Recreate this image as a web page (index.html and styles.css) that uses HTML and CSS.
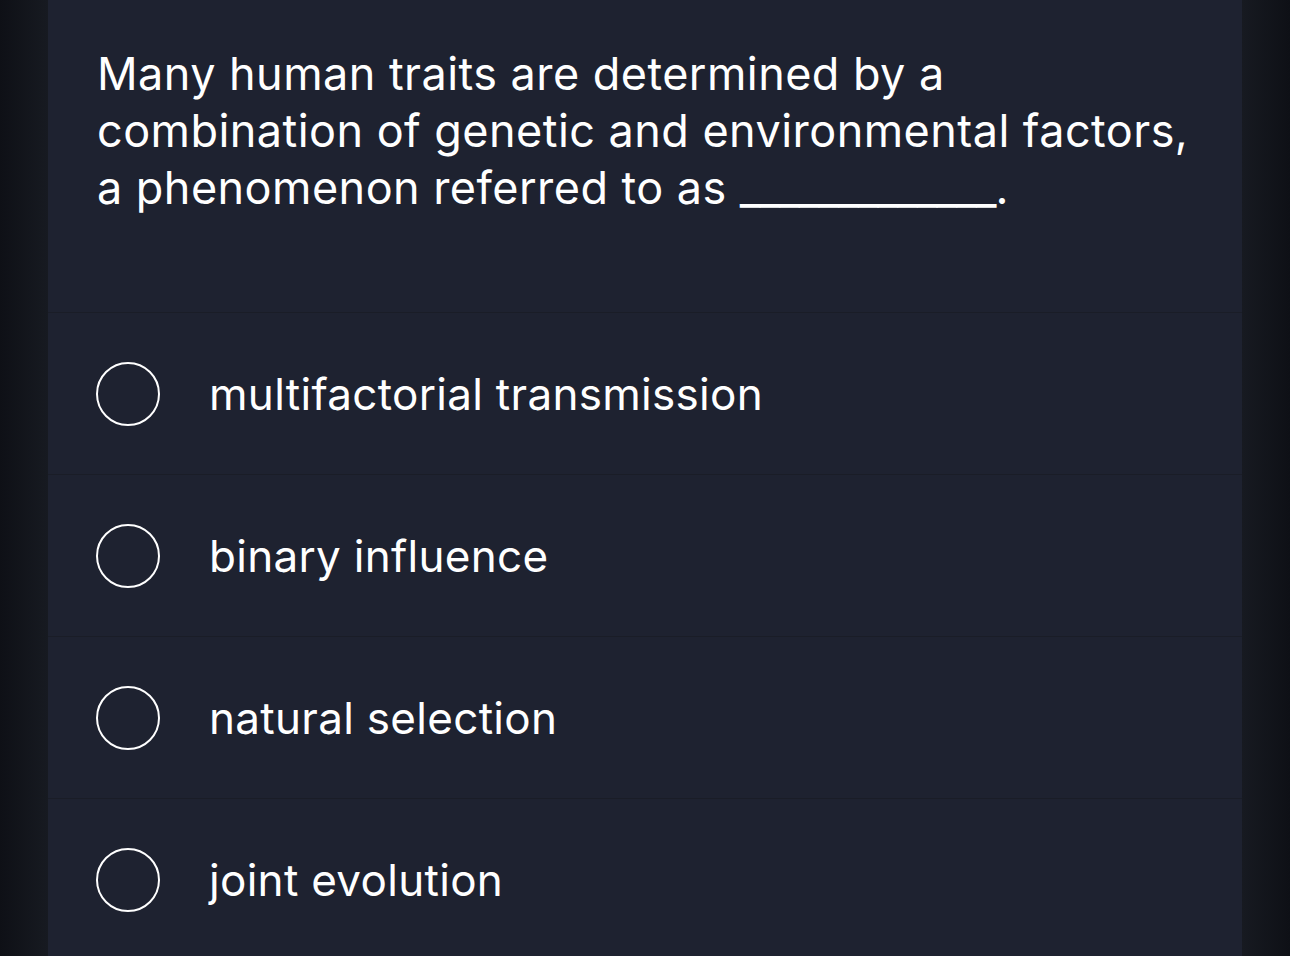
FILE: index.html
```html
<!DOCTYPE html>
<html lang="en">
<head>
<meta charset="utf-8">
<title>Question</title>
<link rel="stylesheet" href="styles.css">
</head>
<body>
<main class="card">
  <section class="question">
    <p class="question-text">Many human traits are determined by a<br>combination of genetic and environmental factors,<br>a phenomenon referred to as <span class="blank">_____________</span>.</p>
  </section>
  <ul class="options">
    <li class="option"><span class="radio"></span><span class="label">multifactorial transmission</span></li>
    <li class="option"><span class="radio"></span><span class="label">binary influence</span></li>
    <li class="option"><span class="radio"></span><span class="label">natural selection</span></li>
    <li class="option"><span class="radio"></span><span class="label">joint evolution</span></li>
  </ul>
</main>
</body>
</html>
```

FILE: styles.css
```css
html, body {
  margin: 0;
  padding: 0;
  height: 100%;
}
body {
  background: linear-gradient(to right, #0e1016 0px, #171a21 48px, #171a21 1242px, #0e1016 1290px);
  font-family: Inter, "Noto Sans", "Liberation Sans", sans-serif;
  color: #ffffff;
  overflow: hidden;
}
.card {
  margin: 0 48px;
  min-height: 100%;
  background: #1e2230;
}
.question {
  padding: 45px 40px 96px 49px;
}
.question-text {
  margin: 0;
  font-size: 45px;
  line-height: 57px;
  letter-spacing: 0.45px;
  white-space: nowrap;
}
.blank {
  letter-spacing: -0.85px;
}
.options {
  list-style: none;
  margin: 0;
  padding: 0;
}
.option {
  display: flex;
  align-items: center;
  height: 161px;
  border-top: 1px solid #1a1d27;
  padding-left: 48px;
}
.radio {
  flex: none;
  width: 60px;
  height: 60px;
  border: 2.5px solid #ffffff;
  border-radius: 50%;
  margin-right: 49px;
}
.label {
  font-size: 44px;
  letter-spacing: 0.3px;
}
```
